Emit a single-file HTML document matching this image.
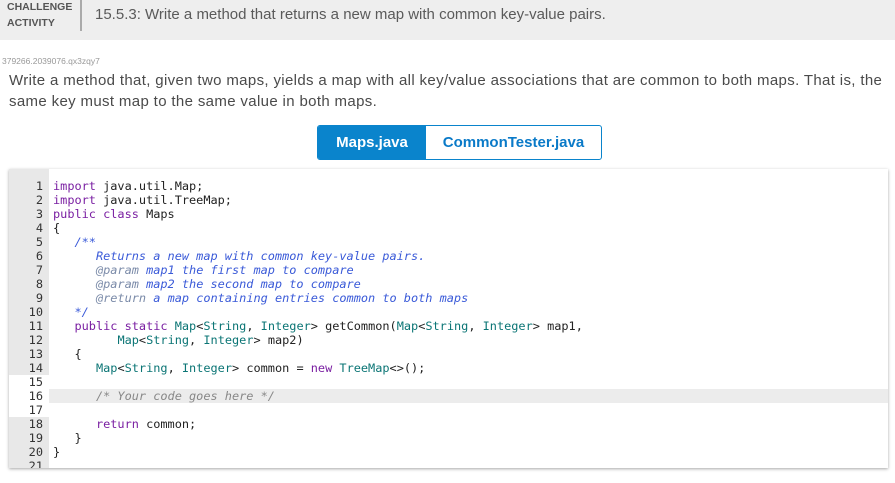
<!DOCTYPE html>
<html><head><style>
body{margin:0;width:895px;height:483px;background:#fff;font-family:"Liberation Sans",sans-serif;position:relative;overflow:hidden}
.hdr{position:absolute;left:0;top:0;width:895px;height:40px;background:#eeeeee}
.ca{position:absolute;left:7px;top:-1px;font-size:10.5px;font-weight:bold;color:#555;line-height:16px}
.sep{position:absolute;left:80px;top:0;width:2px;height:31px;background:#aaa}
.title{position:absolute;left:95px;top:6px;font-size:15px;color:#5a5a5a}
.id{position:absolute;left:2px;top:56px;font-size:8.5px;color:#999}
.desc{position:absolute;left:9px;top:70px;font-size:15px;color:#4a4a4a;line-height:21px;width:885px;letter-spacing:0.35px}
.tabs{position:absolute;left:317px;top:125px;width:283px;height:33px;border:1px solid #0a84cc;border-radius:3px;overflow:hidden}
.t1{position:absolute;left:0;top:0;width:108px;height:33px;background:#0a84cc;color:#fff;font-weight:bold;font-size:15px;line-height:33px;text-align:center}
.t2{position:absolute;left:108px;top:0;width:175px;height:33px;color:#0a7ac8;font-weight:bold;font-size:15px;line-height:33px;text-align:center}
.panel{position:absolute;left:9px;top:169px;width:879px;height:299px;background:#fff;box-shadow:0 1px 3px rgba(0,0,0,.35);overflow:hidden}
.gut{position:absolute;left:0;top:0;width:40px;height:299px;background:#e8e8e8}
.gw{position:absolute;left:0;top:206px;width:40px;height:42px;background:#fff}
.hl{position:absolute;left:40px;top:220px;width:839px;height:14px;background:#ececec}
pre{position:absolute;margin:0;top:10px;font-family:"DejaVu Sans Mono","Liberation Mono",monospace;font-size:11.9px;line-height:14px;color:#222}
.nums{left:0;width:34px;text-align:right;color:#333}
.code{left:44px}
.k{color:#7a1fa2}.t{color:#0b7575}.c{color:#3a5ad8;font-style:italic}.a{color:#7a8aa8;font-style:italic}.g{color:#888;font-style:italic}
</style></head><body>
<div class="hdr"><div class="ca">CHALLENGE<br>ACTIVITY</div><div class="sep"></div><div class="title">15.5.3: Write a method that returns a new map with common key-value pairs.</div></div>
<div class="id">379266.2039076.qx3zqy7</div>
<div class="desc">Write a method that, given two maps, yields a map with all key/value associations that are common to both maps. That is, the same key must map to the same value in both maps.</div>
<div class="tabs"><div class="t1">Maps.java</div><div class="t2">CommonTester.java</div></div>
<div class="panel"><div class="gut"></div><div class="gw"></div><div class="hl"></div>
<pre class="nums">1
2
3
4
5
6
7
8
9
10
11
12
13
14
15
16
17
18
19
20
21</pre>
<pre class="code"><span class="k">import</span> java.util.Map;
<span class="k">import</span> java.util.TreeMap;
<span class="k">public class</span> Maps
{
   <span class="c">/**</span>
      <span class="c">Returns a new map with common key-value pairs.</span>
      <span class="a">@param</span> <span class="c">map1 the first map to compare</span>
      <span class="a">@param</span> <span class="c">map2 the second map to compare</span>
      <span class="a">@return</span> <span class="c">a map containing entries common to both maps</span>
   <span class="c">*/</span>
   <span class="k">public static</span> <span class="t">Map</span>&lt;<span class="t">String</span>, <span class="t">Integer</span>&gt; getCommon(<span class="t">Map</span>&lt;<span class="t">String</span>, <span class="t">Integer</span>&gt; map1,
         <span class="t">Map</span>&lt;<span class="t">String</span>, <span class="t">Integer</span>&gt; map2)
   {
      <span class="t">Map</span>&lt;<span class="t">String</span>, <span class="t">Integer</span>&gt; common = <span class="k">new</span> <span class="t">TreeMap</span>&lt;&gt;();

      <span class="g">/* Your code goes here */</span>

      <span class="k">return</span> common;
   }
}
</pre></div>
</body></html>
